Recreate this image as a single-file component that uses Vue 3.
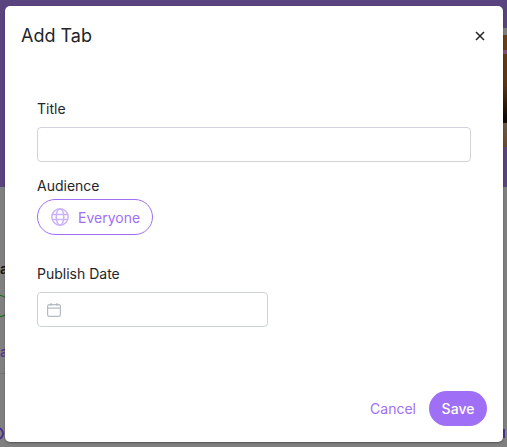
<script setup>
	import { ref } from 'vue'

	const title = ref('')
	const publishDate = ref('')
</script>

<template>
	<div class="page">
		<div class="backdrop">
			<div class="hero">
				<div class="hero-strip"></div>
				<div class="hero-image"></div>
			</div>
			<span class="peek peek-a">a</span>
			<span class="peek-ring"></span>
			<span class="peek peek-link">a</span>
			<span class="peek-line"></span>
			<span class="peek-arc"></span>
			<span class="peek-stem"></span>
		</div>

		<div class="modal">
			<header class="modal-header">
				<h2>Add Tab</h2>
				<button class="close" type="button" aria-label="Close">
					<svg width="10" height="10" viewBox="0 0 10 10">
						<path d="M1 1l8 8M9 1l-8 8" stroke="#24252a" stroke-width="1.5" fill="none" />
					</svg>
				</button>
			</header>

			<div class="modal-body">
				<label class="field-label">Title</label>
				<input v-model="title" class="text-input" type="text" />

				<label class="field-label audience-label">Audience</label>
				<button class="audience" type="button">
					<svg width="20" height="20" viewBox="0 0 20 20" fill="none" stroke="#cbb2fb" stroke-width="1.5">
						<circle cx="10" cy="10" r="8.2" />
						<ellipse cx="10" cy="10" rx="3.8" ry="8.2" />
						<path d="M2.4 7.4h15.2M2.4 12.6h15.2" />
					</svg>
					<span>Everyone</span>
				</button>

				<label class="field-label date-label">Publish Date</label>
				<div class="date-input">
					<svg width="16" height="16" viewBox="0 0 16 16" fill="none" stroke="#b4bac4" stroke-width="1.2">
						<rect x="1.6" y="2.6" width="12.8" height="11.8" rx="1.6" />
						<path d="M1.6 6.2h12.8M5 1v3M11 1v3" />
					</svg>
					<input v-model="publishDate" type="text" />
				</div>
			</div>

			<footer class="modal-footer">
				<button class="cancel" type="button">Cancel</button>
				<button class="save" type="button">Save</button>
			</footer>
		</div>
	</div>
</template>

<style scoped>
	.page {
		position: relative;
		width: 507px;
		height: 447px;
		overflow: hidden;
		font-family: Inter, 'Liberation Sans', sans-serif;
	}

	.backdrop {
		position: absolute;
		inset: 0;
		background: #808080;
	}

	.hero {
		height: 187px;
		background: #5a447f;
		position: relative;
	}

	.hero-strip {
		position: absolute;
		left: 480px;
		top: 28px;
		width: 27px;
		height: 7px;
		background: #7d7d7d;
	}

	.hero-image {
		position: absolute;
		left: 480px;
		top: 35px;
		width: 27px;
		height: 112px;
		background:
			linear-gradient(180deg, transparent 15px, #8a4a78 15px, #8a4a78 19px, transparent 19px),
			linear-gradient(180deg, #6d3d12 0, #5c3410 45%, #170d05 72%, #0d0805 78%, #6a5a48 79%, #6b4a28 100%);
	}

	.peek {
		position: absolute;
		left: 0;
		font-size: 14px;
		line-height: 16px;
	}

	.peek-a {
		top: 261px;
		color: #111;
		font-weight: 600;
	}

	.peek-link {
		top: 344px;
		color: #523d86;
		font-weight: 600;
	}

	.peek-stem {
		position: absolute;
		left: 503px;
		top: 429px;
		width: 2px;
		height: 9px;
		background: #4a2f90;
	}

	.peek-arc {
		position: absolute;
		left: -9px;
		top: 427px;
		width: 9px;
		height: 9px;
		border: 2px solid #4a2f90;
		border-radius: 50%;
	}

	.peek-ring {
		position: absolute;
		left: -24px;
		top: 294px;
		width: 34px;
		height: 22px;
		border: 1.5px solid #0a6a0a;
		border-radius: 50%;
	}

	.peek-line {
		position: absolute;
		left: 0;
		top: 373px;
		width: 5px;
		height: 1px;
		background: #737373;
	}

	.modal {
		position: absolute;
		left: 5px;
		top: 6px;
		width: 498px;
		height: 436px;
		display: flex;
		flex-direction: column;
		background: #fff;
		border-radius: 5px;
		box-sizing: border-box;
		box-shadow: 0 1px 2px rgba(0, 0, 0, 0.35);
	}

	.modal-header {
		display: flex;
		justify-content: space-between;
		align-items: center;
		padding: 17px 18px 0 16px;
	}

	.modal-header h2 {
		margin: 0;
		font-size: 18px;
		line-height: 26px;
		font-weight: 400;
		color: #24252a;
	}

	.close {
		display: flex;
		padding: 0;
		border: 0;
		background: none;
	}

	.modal-body {
		display: flex;
		flex: 1;
		flex-direction: column;
		align-items: flex-start;
		padding: 50px 32px 0;
	}

	.field-label {
		font-size: 14px;
		line-height: 20px;
		color: #24252a;
	}

	.text-input {
		box-sizing: border-box;
		width: 434px;
		height: 35px;
		margin-top: 8px;
		border: 1px solid #d2d2dc;
		border-radius: 4px;
		outline: none;
	}

	.audience-label {
		margin-top: 14px;
	}

	.audience {
		display: flex;
		align-items: center;
		gap: 8px;
		box-sizing: border-box;
		height: 36px;
		margin-top: 3px;
		padding: 0 12px;
		background: #fff;
		border: 1px solid #9f70f5;
		border-radius: 18px;
		color: #9f70f5;
		font: inherit;
		font-size: 14px;
	}

	.date-label {
		margin-top: 29px;
	}

	.date-input {
		display: flex;
		align-items: center;
		gap: 8px;
		box-sizing: border-box;
		width: 231px;
		height: 35px;
		margin-top: 8px;
		padding: 0 8px;
		border: 1px solid #cdd2da;
		border-radius: 4px;
	}

	.date-input input {
		flex: 1;
		min-width: 0;
		border: 0;
		outline: none;
	}

	.modal-footer {
		display: flex;
		justify-content: flex-end;
		align-items: center;
		gap: 13px;
		padding: 0 16px 16px;
	}

	.cancel {
		padding: 0;
		border: 0;
		background: none;
		color: #9f70f5;
		font: inherit;
		font-size: 14px;
	}

	.save {
		width: 58px;
		height: 35px;
		padding: 0;
		border: 0;
		border-radius: 18px;
		background: #9f70f5;
		color: #fff;
		font: inherit;
		font-size: 14px;
		font-weight: 500;
	}
</style>
